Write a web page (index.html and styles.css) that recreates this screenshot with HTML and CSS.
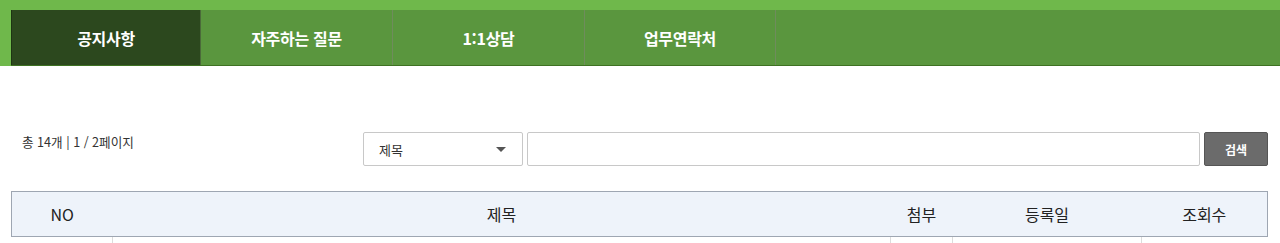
FILE: index.html
```html
<!DOCTYPE html>
<html lang="ko">
<head>
    <meta charset="UTF-8">
    <meta name="viewport" content="width=device-width, initial-scale=1.0">
    <title>공지사항</title>
    <link rel="stylesheet" href="styles.css">
</head>
<body>
    <div class="header">
        <ul class="tabs">
            <li class="tab active">공지사항</li>
            <li class="tab wide">자주하는 질문</li>
            <li class="tab wide">1:1상담</li>
            <li class="tab">업무연락처</li>
        </ul>
    </div>

    <div class="content">
        <div class="toolbar">
            <p class="count">총 14개 | 1 / 2페이지</p>
            <form class="search">
                <div class="select">
                    <span>제목</span>
                    <i class="arrow"></i>
                </div>
                <input type="text" class="keyword">
                <button type="button" class="btn">검색</button>
            </form>
        </div>

        <table class="board">
            <colgroup>
                <col style="width: 101px">
                <col>
                <col style="width: 62px">
                <col style="width: 189px">
                <col style="width: 126px">
            </colgroup>
            <thead>
                <tr>
                    <th>NO</th>
                    <th>제목</th>
                    <th>첨부</th>
                    <th>등록일</th>
                    <th>조회수</th>
                </tr>
            </thead>
            <tbody>
                <tr>
                    <td></td>
                    <td></td>
                    <td></td>
                    <td></td>
                    <td></td>
                </tr>
            </tbody>
        </table>
    </div>
</body>
</html>
```

FILE: styles.css
```css
body {
    margin: 0;
    padding: 0;
    font-family: "Noto Sans CJK KR", "Noto Sans", sans-serif;
    color: #333;
    background-color: #fff;
}

.header {
    background-color: #6fb84b;
    padding: 10px 0 0 11px;
}

.tabs {
    display: flex;
    list-style: none;
    margin: 0;
    padding: 0;
    height: 55px;
    background-color: #5a963e;
    border-bottom: 1px solid #3e7122;
}

.tab {
    width: 191px;
    box-sizing: border-box;
    border-right: 1px solid #6f8c5c;
    display: flex;
    align-items: center;
    justify-content: center;
    color: #fff;
    font-size: 16px;
    font-weight: bold;
    letter-spacing: -0.3px;
}

.tab:first-child {
    width: 190px;
}

.tab.wide {
    width: 192px;
}

.tab.active {
    background-color: #2c481e;
    border-left: 1px solid #1d3512;
    border-right: 1px solid #4b6a3a;
}

.content {
    padding: 0 12px 0 11px;
}

.toolbar {
    display: flex;
    align-items: flex-start;
    margin-top: 66px;
}

.count {
    flex: 1;
    margin: 0;
    padding: 1px 0 0 11px;
    font-size: 12.6px;
    line-height: 18px;
    color: #333;
}

.search {
    display: flex;
    gap: 4px;
    margin: 0;
}

.select {
    width: 160px;
    height: 34px;
    box-sizing: border-box;
    border: 1px solid #c8c8c8;
    border-radius: 2px;
    display: flex;
    align-items: center;
    justify-content: space-between;
    padding: 0 16px 0 15px;
    font-size: 13px;
    color: #333;
}

.arrow {
    width: 0;
    height: 0;
    border-left: 5px solid transparent;
    border-right: 5px solid transparent;
    border-top: 5px solid #555;
}

.keyword {
    width: 673px;
    height: 34px;
    box-sizing: border-box;
    border: 1px solid #c8c8c8;
    border-radius: 2px;
    margin: 0;
    padding: 0 10px;
}

.btn {
    width: 64px;
    height: 34px;
    border: 1px solid #555;
    border-radius: 2px;
    background-color: #6b6b6b;
    color: #fff;
    font-family: inherit;
    font-size: 12px;
    font-weight: bold;
    cursor: pointer;
}

.board {
    width: 100%;
    margin-top: 25px;
    border-collapse: collapse;
    table-layout: fixed;
}

.board th {
    height: 44px;
    background-color: #eef3fa;
    border-top: 1px solid #9ea6b2;
    border-bottom: 1px solid #9ea6b2;
    font-size: 16px;
    font-weight: normal;
    color: #222;
    padding: 0;
}

.board th:first-child {
    border-left: 1px solid #9ea6b2;
}

.board th:last-child {
    border-right: 1px solid #9ea6b2;
}

.board td {
    height: 44px;
    border-left: 1px solid #dcdcdc;
    border-bottom: 1px solid #dcdcdc;
}

.board td:first-child {
    border-left: none;
}
```
